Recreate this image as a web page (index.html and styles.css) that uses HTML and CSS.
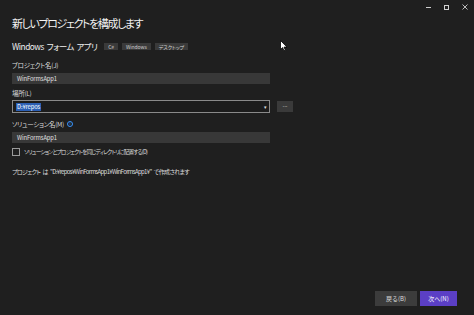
FILE: index.html
```html
<!DOCTYPE html>
<html lang="ja">
<head>
  <meta charset="UTF-8">
  <title>新しいプロジェクトを構成します</title>
  <link rel="stylesheet" href="styles.css">
</head>
<body>
<main class="dialog">
  <div class="caption-buttons">
    <span class="cap-min"></span>
    <span class="cap-max"></span>
    <svg class="cap-close" width="6" height="6" viewBox="0 0 6 6"><path d="M0.5 0.5 L5.5 5.5 M5.5 0.5 L0.5 5.5" stroke="#cfcfcf" stroke-width="0.9"/></svg>
  </div>

  <h1 class="title">新しいプロジェクトを構成します</h1>

  <div class="template">
    <span class="template-name">Windows フォーム アプリ</span>
    <span class="tag">C#</span>
    <span class="tag">Windows</span>
    <span class="tag">デスクトップ</span>
  </div>

  <label class="label label-first">プロジェクト名(J)</label>
  <div class="input">WinFormsApp1</div>

  <label class="label label-second">場所(L)</label>
  <div class="location-row">
    <div class="input input-focus">
      <span class="selected">D:¥repos</span>
      <span class="drop">▾</span>
    </div>
    <div class="browse">...</div>
  </div>

  <label class="label label-third">ソリューション名(M) <span class="info">i</span></label>
  <div class="input">WinFormsApp1</div>

  <div class="check-row">
    <span class="checkbox"></span>
    <span class="check-text">ソリューションとプロジェクトを同じディレクトリに配置する(D)</span>
  </div>

  <p class="path">プロジェクト は "D:¥repos¥WinFormsApp1¥WinFormsApp1¥" で作成されます</p>

  <div class="footer">
    <button class="btn">戻る(B)</button>
    <button class="btn btn-primary">次へ(N)</button>
  </div>

  <svg class="cursor" width="8" height="12" viewBox="0 0 8 12"><path d="M0.5 0.5 L0.5 9.5 L2.6 7.6 L4 10.8 L5.4 10.2 L4 7.1 L7 7.1 Z" fill="#fff" stroke="#000" stroke-width="0.8"/></svg>
</main>
</body>
</html>
```

FILE: styles.css
```css
* {
  margin: 0;
  padding: 0;
  box-sizing: border-box;
}

body {
  background: #1f1f1f;
  font-family: "Noto Sans CJK JP", "Noto Sans", sans-serif;
  font-feature-settings: "palt";
  color: #e6e6e6;
}

.dialog {
  position: relative;
  width: 474px;
  height: 315px;
  padding: 0 12px 9px 12px;
  display: flex;
  flex-direction: column;
}

.caption-buttons {
  position: absolute;
  top: 4px;
  right: 6px;
  display: flex;
  align-items: center;
  gap: 13px;
}

.cap-min {
  width: 5px;
  height: 1px;
  background: #cfcfcf;
}

.cap-max {
  width: 5px;
  height: 5px;
  border: 1px solid #cfcfcf;
}

.title {
  margin-top: 14px;
  height: 18px;
  line-height: 18px;
  font-size: 11px;
  font-weight: normal;
  color: #f2f2f2;
  letter-spacing: -1.4px;
}

.template {
  margin-top: 8px;
  height: 12px;
  display: flex;
  align-items: center;
  gap: 4px;
}

.template-name {
  font-size: 8.3px;
  line-height: 12px;
  margin-right: 3px;
  color: #f0f0f0;
  letter-spacing: -0.5px;
  word-spacing: 1.5px;
}

.tag {
  background: #3a3a3a;
  color: #d0d0d0;
  font-size: 5px;
  line-height: 7px;
  padding: 0 4px;
  letter-spacing: -0.1px;
}

.label {
  display: block;
  height: 10px;
  line-height: 10px;
  font-size: 6.5px;
  color: #dcdcdc;
  letter-spacing: -0.3px;
}

.label-first {
  margin-top: 8px;
}

.label-second {
  margin-top: 4px;
}

.label-third {
  margin-top: 6px;
  display: flex;
  align-items: center;
  gap: 3px;
}

.info {
  width: 6px;
  height: 6px;
  border: 1px solid #3794ff;
  border-radius: 50%;
  color: #3794ff;
  font-size: 4px;
  line-height: 4px;
  text-align: center;
  font-family: "DejaVu Sans", sans-serif;
}

.input {
  margin-top: 3px;
  width: 258px;
  height: 11px;
  background: #383838;
  font-size: 5.8px;
  line-height: 11px;
  padding-left: 5px;
  color: #e0e0e0;
  letter-spacing: -0.1px;
}

.location-row {
  margin-top: 2px;
  display: flex;
  align-items: center;
  gap: 7px;
}

.input-focus {
  margin-top: 0;
  height: 13px;
  background: #1c1c1c;
  border: 1px solid #8a8a8a;
  line-height: 11px;
  padding-left: 3px;
  display: flex;
  align-items: center;
  justify-content: space-between;
  padding-right: 2px;
}

.selected {
  background: #2b5fb4;
  color: #fff;
  padding: 0 1px;
  line-height: 8px;
}

.drop {
  font-size: 5px;
  color: #e0e0e0;
}

.browse {
  width: 16px;
  height: 11px;
  background: #3a3a3a;
  color: #cfcfcf;
  font-size: 6px;
  line-height: 8px;
  text-align: center;
}

.check-row {
  margin-top: 5px;
  height: 8px;
  display: flex;
  align-items: center;
  gap: 4px;
}

.checkbox {
  width: 8px;
  height: 8px;
  border: 1px solid #9a9a9a;
}

.check-text {
  font-size: 5.6px;
  color: #dcdcdc;
  letter-spacing: -0.75px;
}

.path {
  margin-top: 11px;
  height: 10px;
  line-height: 10px;
  font-size: 6px;
  color: #dcdcdc;
  letter-spacing: -0.65px;
  word-spacing: 1.5px;
}

.footer {
  margin-top: auto;
  display: flex;
  justify-content: flex-end;
  gap: 3px;
  padding-right: 5px;
}

.btn {
  width: 42px;
  height: 15px;
  border: none;
  background: #3c3c3c;
  color: #dcdcdc;
  font-family: inherit;
  font-size: 6px;
}

.btn-primary {
  width: 37px;
  background: #5b3fc5;
  color: #fff;
}

.cursor {
  position: absolute;
  left: 280px;
  top: 40px;
}
```
